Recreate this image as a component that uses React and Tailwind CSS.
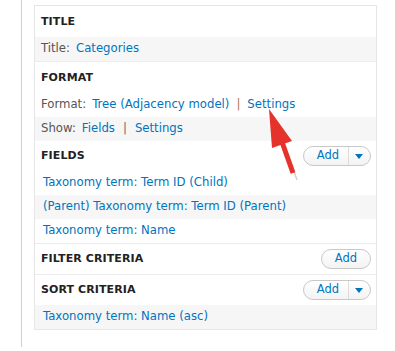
import React from 'react';

// Pill-shaped "Add" button, optionally with a split dropdown caret
const AddButton = ({ dropdown }) => (
  <div className="flex h-[20px] items-center rounded-full border border-[#c8c8c8] bg-gradient-to-b from-white to-[#f3f3f3] text-[11.5px] text-[#0074bd]">
    <span className={dropdown ? 'pl-[13px] pr-[9px]' : 'px-[13px]'}>Add</span>
    {dropdown && (
      <span className="flex h-full items-center border-l border-[#dcdcdc] pl-[6px] pr-[7px]">
        <svg width="8" height="5" viewBox="0 0 8 5">
          <path d="M0 0h8L4 5z" fill="#0074bd" />
        </svg>
      </span>
    )}
  </div>
);

const Header = ({ children, button, top }) => (
  <div className={`flex items-center justify-between pl-[6px] pr-[5px] ${top ? 'h-[31px] pt-[2px]' : 'h-[30px]'}`}>
    <h3 className="text-[11px] font-bold tracking-[0.1px] text-[#222]">{children}</h3>
    {button}
  </div>
);

const Row = ({ gray, children }) => (
  <div className={`flex h-[24px] items-center pl-[8px] ${gray ? 'bg-[#f6f6f6]' : 'bg-white'}`}>
    {children}
  </div>
);

const Label = ({ children }) => <span className="mr-[6px] text-[#555]">{children}</span>;
const A = ({ children }) => <span className="text-[#0074bd]">{children}</span>;

export default function App() {
  return (
    <div className="relative h-[351px] w-[395px] bg-white pl-[21px] font-['DejaVu_Sans',sans-serif] text-[11.7px]">
      <div className="h-[347px] border-l border-[#cfcfcf] pl-[12px] pt-[5px]">
        <div className="w-[343px] border border-[#e6e6e6]">
          <Header top>TITLE</Header>
          <div className="flex h-[25px] items-center border-b border-[#ececec] bg-[#f6f6f6] pl-[6px]">
            <Label>Title:</Label>
            <A>Categories</A>
          </div>

          <Header top>FORMAT</Header>
          <div className="flex h-[24px] items-center pl-[6px]">
            <Label>Format:</Label>
            <A>Tree (Adjacency model)</A>
            <span className="mx-[7px] text-[#a8794e]">|</span>
            <A>Settings</A>
          </div>
          <div className="flex h-[24px] items-center bg-[#f6f6f6] pl-[6px]">
            <Label>Show:</Label>
            <A>Fields</A>
            <span className="mx-[8px] text-[#666]">|</span>
            <A>Settings</A>
          </div>

          <div>
            <Header button={<AddButton dropdown />}>FIELDS</Header>
            <Row><A>Taxonomy term: Term ID (Child)</A></Row>
            <Row gray><A>(Parent) Taxonomy term: Term ID (Parent)</A></Row>
            <Row><A>Taxonomy term: Name</A></Row>
          </div>

          <div className="border-t border-[#ececec]">
            <Header button={<AddButton />}>FILTER CRITERIA</Header>
          </div>

          <div className="border-t border-[#ececec]">
            <Header button={<AddButton dropdown />}>SORT CRITERIA</Header>
            <Row gray><A>Taxonomy term: Name (asc)</A></Row>
          </div>
        </div>
      </div>

      {/* red annotation arrow pointing at Settings */}
      <svg className="pointer-events-none absolute left-0 top-0" width="395" height="351" viewBox="0 0 395 351">
        <line x1="284" y1="143" x2="297" y2="180" stroke="#d8d0c8" strokeWidth="1.5" />
        <line x1="282" y1="142" x2="293" y2="173" stroke="#e5322b" strokeWidth="5" />
        <path d="M269 109 L272 148 L292 141 Z" fill="#e5322b" />
      </svg>
    </div>
  );
}
